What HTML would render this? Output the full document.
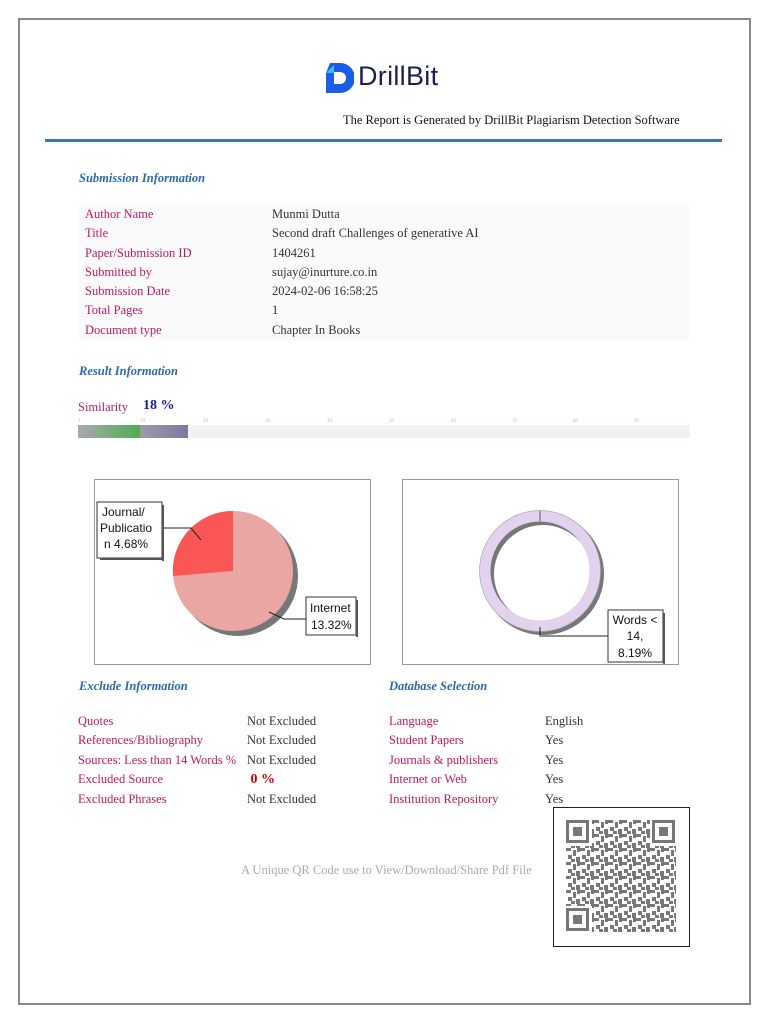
<!DOCTYPE html>
<html><head><meta charset="utf-8"><style>
body{margin:0;width:768px;height:1024px;background:#fff;font-family:"Liberation Serif",serif;position:relative;overflow:hidden}
.a{position:absolute}
.frame{left:18px;top:18px;width:729px;height:983px;border:2px solid #888}
.h{color:#2a6aa8;font-style:italic;font-weight:bold;font-size:12.5px}
.lab{color:#c0185a;font-size:12.5px}
.val{color:#333;font-size:12.5px}
</style></head><body>
<div class="a frame"></div>
<svg class="a" style="left:326px;top:63px" width="28" height="30" viewBox="0 0 28 30"><path d="M4 0H14A13 13 0 0 1 14 30H0V10Z" fill="#1a5ee8"/><path d="M0 10L8 2V10Z" fill="#39c0f0"/><path d="M8 9H14A6 6 0 0 1 14 21H8Z" fill="#fff"/></svg>
<div class="a" style="left:358px;top:61px;font-family:'Liberation Sans',sans-serif;font-size:27px;color:#1c2050;letter-spacing:0.3px">DrillBit</div>
<div class="a" style="left:343px;top:113px;font-size:12.5px;color:#111">The Report is Generated by DrillBit Plagiarism Detection Software</div>
<div class="a" style="left:45px;top:139px;width:677px;height:3px;background:#3a78b5"></div>
<div class="a h" style="left:79px;top:171px">Submission Information</div>
<div class="a" style="left:79px;top:203px;width:610px;height:137px;background:#fafafa"></div>
<div class="a lab" style="left:85px;top:205px;line-height:19.3px">Author Name<br>Title<br>Paper/Submission ID<br>Submitted by<br>Submission Date<br>Total Pages<br>Document type</div>
<div class="a val" style="left:272px;top:205px;line-height:19.3px">Munmi Dutta<br>Second draft Challenges of generative AI<br>1404261<br>sujay@inurture.co.in<br>2024-02-06 16:58:25<br>1<br>Chapter In Books</div>
<div class="a h" style="left:79px;top:364px">Result Information</div>
<div class="a lab" style="left:78px;top:400px">Similarity</div>
<div class="a" style="left:143px;top:398px;font-size:14px;font-weight:bold;color:#1a1aa0">18 %</div>
<div class="a" style="left:78px;top:419px;width:560px;font-size:5px;color:#bbb">
<span class="a" style="left:0">1</span><span class="a" style="left:62px">10</span><span class="a" style="left:125px">20</span><span class="a" style="left:187px">30</span><span class="a" style="left:249px">40</span><span class="a" style="left:311px">50</span><span class="a" style="left:373px">60</span><span class="a" style="left:434px">70</span><span class="a" style="left:495px">80</span><span class="a" style="left:556px">90</span></div>
<div class="a" style="left:78px;top:425px;width:612px;height:13px;background:#f3f1f3"></div>
<div class="a" style="left:78px;top:425px;width:62px;height:13px;background:linear-gradient(90deg,#b0a6b0,#4caf50)"></div>
<div class="a" style="left:140px;top:425px;width:48px;height:13px;background:linear-gradient(90deg,#a09aa8,#7a7aa0)"></div>
<div class="a" style="left:94px;top:479px;width:275px;height:184px;border:1px solid #999"></div>
<svg class="a" style="left:94px;top:479px" width="277" height="186">
<circle cx="144" cy="97" r="60" fill="#777"/>
<circle cx="139" cy="92" r="60" fill="#eaa6a2"/>
<path d="M139 92V32A60 60 0 0 0 79 97Z" fill="#fb5656"/>
<polyline points="67,49 97,49 107,61" stroke="#222" fill="none"/>
<polyline points="175,133 190,140 212,140" stroke="#222" fill="none"/>
<rect x="3" y="23" width="65" height="56" fill="#fff" stroke="#333"/><rect x="68" y="26" width="2" height="56" fill="#555"/><rect x="6" y="79" width="64" height="2" fill="#555"/>
<text font-family="Liberation Sans" font-size="12" fill="#111"><tspan x="8" y="37">Journal/</tspan><tspan x="6" y="53">Publicatio</tspan><tspan x="10" y="69">n 4.68%</tspan></text>
<rect x="212" y="118" width="50" height="38" fill="#fff" stroke="#333"/><rect x="262" y="121" width="2" height="37" fill="#555"/>
<text font-family="Liberation Sans" font-size="12" fill="#111"><tspan x="216" y="133">Internet</tspan><tspan x="217" y="150">13.32%</tspan></text>
</svg>
<div class="a" style="left:402px;top:479px;width:275px;height:184px;border:1px solid #999"></div>
<svg class="a" style="left:402px;top:479px" width="277" height="186">
<circle cx="141" cy="95" r="55" fill="none" stroke="#777" stroke-width="12"/>
<circle cx="138" cy="92" r="55" fill="none" stroke="#e2d2ee" stroke-width="11"/>
<circle cx="138" cy="92" r="60.5" fill="none" stroke="#aaa" stroke-width="0.7"/>
<line x1="138" y1="32" x2="138" y2="42" stroke="#555"/>
<polyline points="138,148 138,157 206,157" stroke="#222" fill="none"/>
<rect x="206" y="131" width="55" height="52" fill="#fff" stroke="#333"/><rect x="261" y="134" width="2" height="51" fill="#555"/>
<text font-family="Liberation Sans" font-size="12" fill="#111" text-anchor="middle"><tspan x="233" y="145">Words &lt;</tspan><tspan x="233" y="161">14,</tspan><tspan x="233" y="178">8.19%</tspan></text>
</svg>
<div class="a h" style="left:79px;top:679px">Exclude Information</div>
<div class="a h" style="left:389px;top:679px">Database Selection</div>
<div class="a lab" style="left:78px;top:712px;line-height:19.4px">Quotes<br>References/Bibliography<br>Sources: Less than 14 Words %<br>Excluded Source<br>Excluded Phrases</div>
<div class="a val" style="left:247px;top:712px;line-height:19.4px">Not Excluded<br>Not Excluded<br>Not Excluded<br><b style="color:#d00;font-size:14px">&nbsp;0 %</b><br>Not Excluded</div>
<div class="a lab" style="left:389px;top:712px;line-height:19.4px">Language<br>Student Papers<br>Journals &amp; publishers<br>Internet or Web<br>Institution Repository</div>
<div class="a val" style="left:545px;top:712px;line-height:19.4px">English<br>Yes<br>Yes<br>Yes<br>Yes</div>
<div class="a" style="left:241px;top:863px;font-size:12.5px;color:#aaa">A Unique QR Code use to View/Download/Share Pdf File</div>
<div class="a" style="left:553px;top:807px;width:135px;height:138px;border:1px solid #222;background:#fff"></div>
<svg class="a" style="left:566px;top:820px" width="110" height="112">
<defs><pattern id="q" width="14" height="14" patternUnits="userSpaceOnUse"><rect width="14" height="14" fill="#fff"/><rect x="0" y="0" width="5" height="3" fill="#777"/><rect x="7" y="2" width="3" height="6" fill="#777"/><rect x="2" y="7" width="4" height="4" fill="#777"/><rect x="10" y="9" width="4" height="5" fill="#777"/><rect x="5" y="11" width="4" height="3" fill="#777"/><rect x="11" y="0" width="3" height="4" fill="#777"/></pattern></defs>
<rect width="110" height="112" fill="url(#q)"/>
<g fill="#fff"><rect x="0" y="0" width="26" height="26"/><rect x="84" y="0" width="26" height="26"/><rect x="0" y="86" width="26" height="26"/></g>
<g fill="none" stroke="#777" stroke-width="3"><rect x="1.5" y="1.5" width="20" height="20"/><rect x="87.5" y="1.5" width="20" height="20"/><rect x="1.5" y="89.5" width="20" height="20"/></g>
<g fill="#777"><rect x="7" y="7" width="9" height="9"/><rect x="93" y="7" width="9" height="9"/><rect x="7" y="95" width="9" height="9"/></g>
</svg>
</body></html>
